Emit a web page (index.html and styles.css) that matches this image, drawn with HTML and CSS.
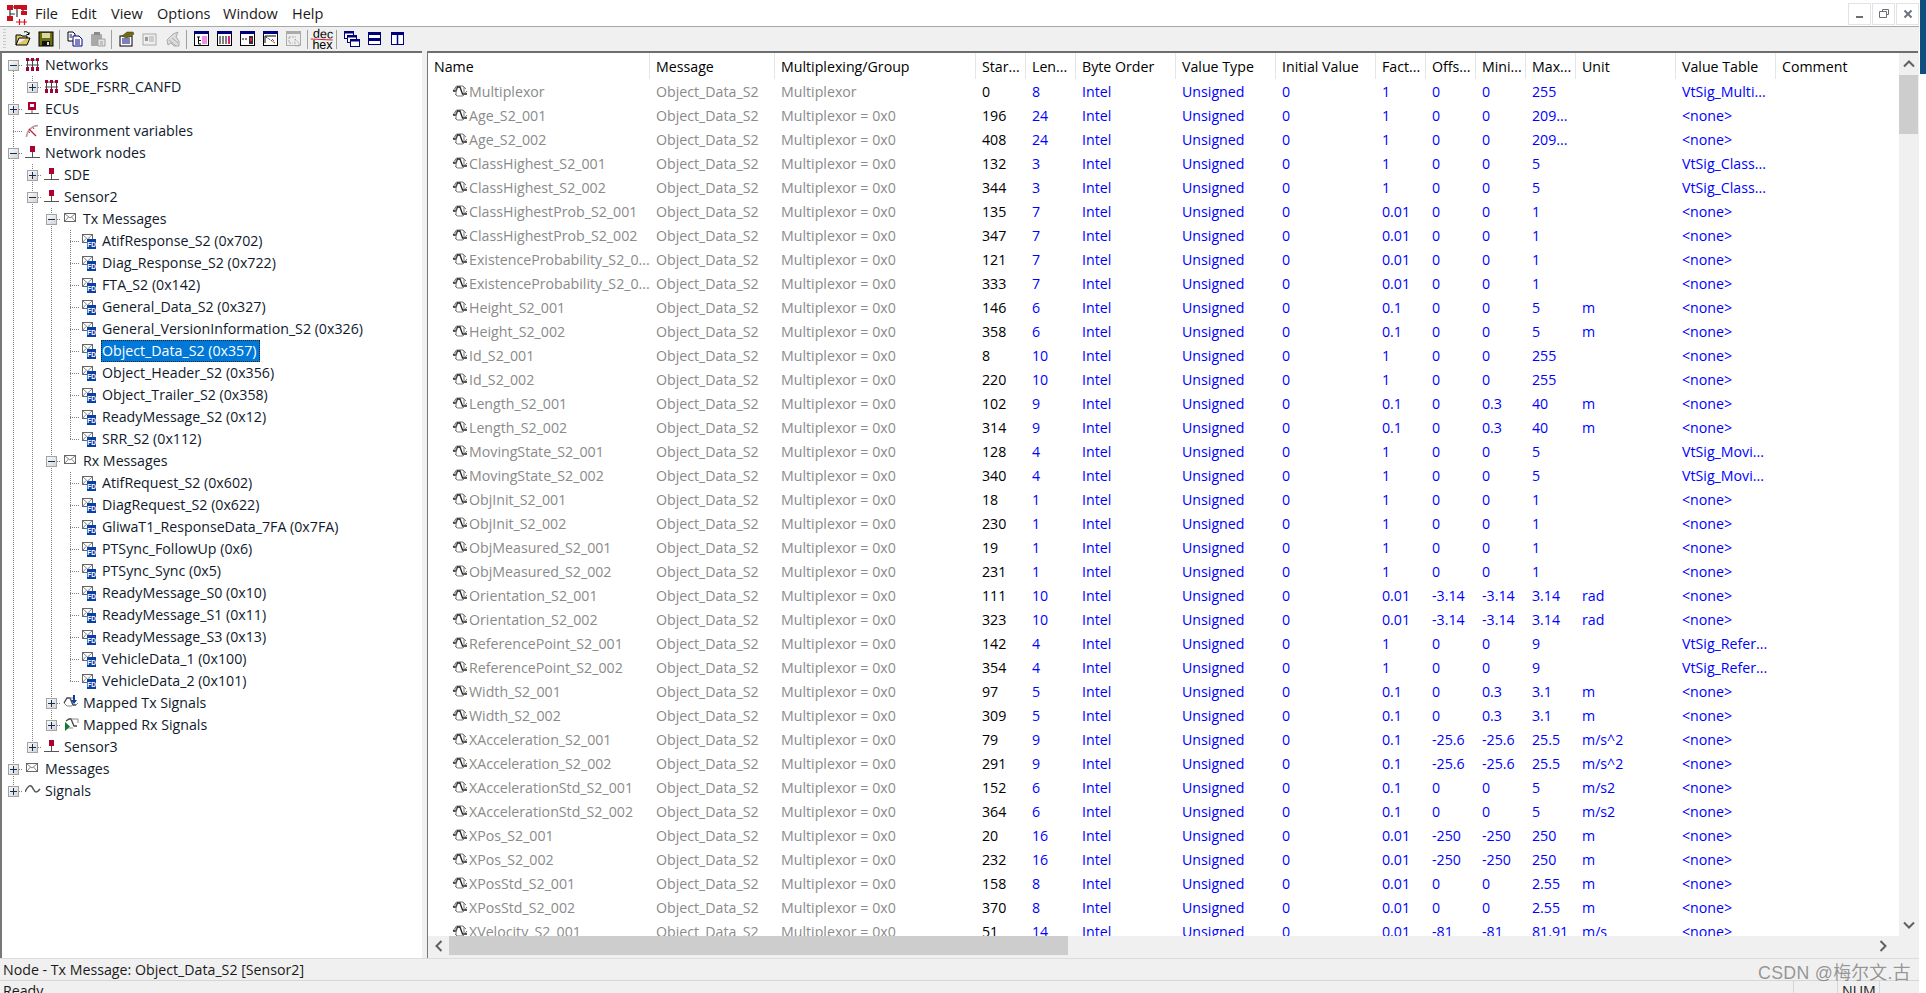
FILE: index.html
```html
<!DOCTYPE html>
<html lang="en">
<head>
<meta charset="utf-8">
<title>CANdb++ Editor</title>
<link rel="stylesheet" href="styles.css">
</head>
<body>
<svg class="defs" width="0" height="0" aria-hidden="true">
  <symbol id="logo" viewBox="0 0 20 20">
    <path d="M5 2H15M3 4V9H8M10 3V12M16 4V8M3 9V13" fill="none" stroke="#333" stroke-width="1.200"/>
    <rect x="0" y="0" width="6" height="5" fill="#c8101e"/><rect x="7" y="0" width="7" height="4" fill="#c8101e"/><rect x="14" y="0" width="6" height="5" fill="#c8101e"/>
    <rect x="14" y="6" width="6" height="4" fill="#c8101e"/><rect x="0" y="11" width="6" height="5" fill="#c8101e"/>
    <path d="M9 17H20M12.500 14V20M17.500 14V20" stroke="#e01020" stroke-width="1.200" fill="none"/>
  </symbol>
  <symbol id="net" viewBox="0 0 16 16">
    <path d="M1 3H14M2.500 3V12M7.500 3V12M12.500 3V12M1 8H14" stroke="#444" fill="none"/>
    <g fill="#a30034"><rect x="1" y="1" width="3" height="3"/><rect x="6" y="1" width="3" height="3"/><rect x="11" y="1" width="3" height="3"/><rect x="1" y="10" width="3" height="4"/><rect x="6" y="10" width="3" height="4"/><rect x="11" y="10" width="3" height="4"/></g>
  </symbol>
  <symbol id="ecu" viewBox="0 0 16 16">
    <rect x="3" y="1" width="8" height="8" fill="#b00030"/><rect x="5" y="3" width="4" height="3" fill="#fff"/>
    <path d="M7 9V13M0 12.500H14" stroke="#555" fill="none"/>
  </symbol>
  <symbol id="node" viewBox="0 0 16 16">
    <rect x="5" y="1" width="5" height="6" fill="#b00030"/>
    <path d="M7.500 7V12M0 12.500H15" stroke="#555" fill="none"/>
  </symbol>
  <symbol id="gauge" viewBox="0 0 16 16">
    <path d="M1.500 14A12 12 0 0 1 13 2.500" fill="none" stroke="#b89aa8" stroke-width="1.500"/>
    <path d="M4 6L11 13" stroke="#c02030" stroke-width="1.300"/><path d="M8 4.500L9 6M3.500 9L5 9.500" stroke="#c02030"/>
  </symbol>
  <symbol id="env" viewBox="0 0 16 16">
    <rect x="1.500" y="2.500" width="11" height="8" fill="#fff" stroke="#666"/>
    <path d="M2 3L7 7L12 3M2 10L5.500 6M12 10L8.500 6" stroke="#888" fill="none"/>
  </symbol>
  <symbol id="fd" viewBox="0 0 16 16">
    <rect x="0.500" y="1.500" width="10" height="8" fill="#fff" stroke="#666"/>
    <path d="M1 2L5.500 6L10 2M1 9L4 5.500M10 9L7 5.500" stroke="#888" fill="none"/>
    <rect x="5" y="6" width="9" height="10" fill="#0b3fa8"/>
    <text x="9.500" y="14" class="fdtxt">FD</text>
  </symbol>
  <symbol id="wave" viewBox="0 0 16 16">
    <path d="M0 9C2 5 4 2 6 3C8 4 9 9 11 9C12.500 9 13.500 8 15 6" fill="none" stroke="#555" stroke-width="1.500"/>
  </symbol>
  <symbol id="mtx" viewBox="0 0 16 16">
    <path d="M1 8L4 3H7L10 10H13" fill="none" stroke="#444" stroke-width="1.300"/>
    <path d="M1 8L4 11H9M6 3H11M13 10L15 8" fill="none" stroke="#888"/>
    <path d="M11 0V7" stroke="#0b3fa8" stroke-width="2"/><path d="M8 5H14L11 9Z" fill="#0b3fa8"/>
  </symbol>
  <symbol id="mrx" viewBox="0 0 16 16">
    <path d="M3 4L6 2H8L11 9H14" fill="none" stroke="#444" stroke-width="1.300"/>
    <path d="M8 2H15V6M3 11H10" fill="none" stroke="#888"/>
    <path d="M2 5V14L7 9.500Z" fill="#0f7a33"/>
  </symbol>
  <symbol id="sg" viewBox="0 0 16 16">
    <path d="M1 7L4.500 2H11L14 5M3 10L5 12H11L15 7" fill="none" stroke="#777"/>
    <path d="M1 7H4L5.500 3H8L10.500 10H15" fill="none" stroke="#222" stroke-width="1.300"/>
    <path d="M4 3V11M12 3V11" stroke="#777" fill="none"/>
  </symbol>
  <symbol id="t-open" viewBox="0 0 16 16">
    <path d="M1 14V4H6L7 5H12V7H4L1 14H12L15 7H12" fill="#e0c860" stroke="#000"/>
    <path d="M9 1C11 0 13 1 14 3M14 1V3.500H11.500" fill="none" stroke="#000"/>
  </symbol>
  <symbol id="t-save" viewBox="0 0 16 16">
    <rect x="1" y="1" width="14" height="14" fill="#6c6c10" stroke="#000"/>
    <rect x="4" y="2" width="8" height="5" fill="#d8d8a0"/><rect x="4" y="10" width="8" height="5" fill="#111"/><rect x="9" y="11" width="2" height="3" fill="#ddd"/>
  </symbol>
  <symbol id="t-copy" viewBox="0 0 16 16">
    <path d="M1 1H6L8 3V10H1Z" fill="#fff" stroke="#000"/>
    <path d="M6 5H12L15 8V15H6Z" fill="#fff" stroke="#00007c"/>
    <path d="M2.500 4H5M2.500 6H5M8 9H13M8 11H13M8 13H13" stroke="#00007c"/>
  </symbol>
  <symbol id="t-paste" viewBox="0 0 16 16">
    <rect x="1" y="3" width="11" height="12" rx="1" fill="#a8a8a8"/><rect x="4" y="1" width="6" height="3" fill="#8a8a8a"/>
    <path d="M8 8H15V15H8Z" fill="#e4e4e4" stroke="#a0a0a0"/><path d="M10 11H13M10 13H13" stroke="#a0a0a0"/>
  </symbol>
  <symbol id="t-prop" viewBox="0 0 16 16">
    <rect x="1" y="5" width="12" height="10" fill="#fff" stroke="#000"/>
    <path d="M3 8H11M3 10H11M3 12H11" stroke="#00007c"/>
    <path d="M3 5L8 1H14L15 3L11 6L7 7Z" fill="#6f6c10" stroke="#333" stroke-width="0.500"/>
  </symbol>
  <symbol id="t-prop2" viewBox="0 0 16 16">
    <rect x="1" y="3" width="13" height="11" fill="#eee" stroke="#aaa"/>
    <rect x="3" y="6" width="3" height="4" fill="#999"/><path d="M7 6H12M7 8H12M7 10H12" stroke="#aaa"/>
  </symbol>
  <symbol id="t-tool" viewBox="0 0 16 16">
    <path d="M2 9L8 3L13 1L11 6L14 10V15H9L6 12L3 14Z" fill="#ddd" stroke="#aaa"/>
    <path d="M4 9L11 15M7 7L13 12" stroke="#aaa"/>
  </symbol>
  <symbol id="t-w1" viewBox="0 0 16 16">
    <rect x="0.500" y="0.500" width="14" height="14" fill="#fff" stroke="#000"/><rect x="0" y="0" width="15" height="3" fill="#00007c"/>
    <path d="M3 6H6M4.500 6V13H7M4.500 9.500H7" stroke="#000" fill="none"/><path d="M8 6H13M8 8H13M8 10H13M8 12H13" stroke="#e020c0"/>
  </symbol>
  <symbol id="t-w2" viewBox="0 0 16 16">
    <rect x="0.500" y="0.500" width="14" height="14" fill="#fff" stroke="#000"/><rect x="0" y="0" width="15" height="3" fill="#00007c"/>
    <path d="M3 5V13M6 5V13M9 5V13" stroke="#000"/><path d="M12 5V13" stroke="#e02080" stroke-width="2"/>
  </symbol>
  <symbol id="t-w3" viewBox="0 0 16 16">
    <rect x="0.500" y="0.500" width="14" height="14" fill="#fff" stroke="#000"/><rect x="0" y="0" width="15" height="3" fill="#00007c"/>
    <path d="M2 8H8" stroke="#000" stroke-dasharray="2 1"/><rect x="9" y="5" width="4" height="8" fill="#333"/><rect x="10" y="7" width="2" height="3" fill="#e02040"/>
  </symbol>
  <symbol id="t-w4" viewBox="0 0 16 16">
    <rect x="0.500" y="0.500" width="14" height="14" fill="#fff" stroke="#000"/><rect x="0" y="0" width="15" height="3" fill="#00007c"/>
    <path d="M2 12V5H13" fill="none" stroke="#000"/><path d="M3 6L6 8L9 10L12 12" stroke="#000" stroke-dasharray="1 1"/><path d="M9 8L11 10" stroke="#e02040"/>
  </symbol>
  <symbol id="t-w5" viewBox="0 0 16 16">
    <rect x="0.500" y="0.500" width="14" height="14" fill="#eee" stroke="#aaa"/><rect x="0" y="0" width="15" height="3" fill="#aaa"/>
    <path d="M3 6H10M3 6V12H7M9 8L13 12V15H9Z" fill="none" stroke="#aaa" stroke-dasharray="2 1"/>
  </symbol>
  <symbol id="t-casc" viewBox="0 0 16 16">
    <rect x="0.500" y="0.500" width="9" height="7" fill="#fff" stroke="#00007c"/><rect x="0" y="0" width="10" height="2.500" fill="#00007c"/>
    <rect x="3.500" y="4.500" width="9" height="7" fill="#fff" stroke="#00007c"/><rect x="3" y="4" width="10" height="2.500" fill="#00007c"/>
    <rect x="6.500" y="8.500" width="9" height="7" fill="#fff" stroke="#00007c"/><rect x="6" y="8" width="10" height="2.500" fill="#00007c"/>
  </symbol>
  <symbol id="t-hor" viewBox="0 0 16 16">
    <rect x="1.500" y="1.500" width="12" height="12" fill="#fff" stroke="#00007c"/>
    <rect x="1" y="1" width="13" height="3" fill="#00007c"/><rect x="1" y="7" width="13" height="3" fill="#00007c"/>
  </symbol>
  <symbol id="t-ver" viewBox="0 0 16 16">
    <rect x="1.500" y="1.500" width="12" height="12" fill="#fff" stroke="#00007c"/>
    <rect x="1" y="1" width="13" height="3" fill="#00007c"/><path d="M7.500 2V14" stroke="#00007c" stroke-width="1.500"/>
  </symbol>
</svg>

<div class="screen">
<div class="app">
  <header class="menubar">
    <svg class="logo"><use href="#logo"/></svg>
    <nav class="menu"><span>File</span><span>Edit</span><span>View</span><span>Options</span><span>Window</span><span>Help</span></nav>
    <div class="winctl">
      <button class="wbtn" aria-label="Minimize"><svg viewBox="0 0 10 10"><path d="M1 8H8" stroke="#6d6d78" stroke-width="2"/></svg></button>
      <button class="wbtn" aria-label="Restore"><svg viewBox="0 0 10 10"><path d="M3.500 2.500V0.500H9.500V5.500H7.500M0.500 2.500H7.500V8.500H0.500Z" fill="none" stroke="#6d6d78"/></svg></button>
      <button class="wbtn" aria-label="Close"><svg viewBox="0 0 10 10"><path d="M1.500 1.500L8.500 8.500M8.500 1.500L1.500 8.500" stroke="#6d7480" stroke-width="2"/></svg></button>
    </div>
  </header>

  <div class="toolbar">
    <span class="grip"></span>
    <span class="tb"><svg><use href="#t-open"/></svg></span>
    <span class="tb"><svg><use href="#t-save"/></svg></span>
    <span class="tsep"></span>
    <span class="tb"><svg><use href="#t-copy"/></svg></span>
    <span class="tb"><svg><use href="#t-paste"/></svg></span>
    <span class="tsep"></span>
    <span class="tb"><svg><use href="#t-prop"/></svg></span>
    <span class="tb"><svg><use href="#t-prop2"/></svg></span>
    <span class="tb"><svg><use href="#t-tool"/></svg></span>
    <span class="tsep"></span>
    <span class="tb"><svg><use href="#t-w1"/></svg></span>
    <span class="tb"><svg><use href="#t-w2"/></svg></span>
    <span class="tb"><svg><use href="#t-w3"/></svg></span>
    <span class="tb"><svg><use href="#t-w4"/></svg></span>
    <span class="tb"><svg><use href="#t-w5"/></svg></span>
    <span class="tsep"></span>
    <span class="tb dechex"><span class="dec">dec</span><span class="hex">hex</span></span>
    <span class="tsep"></span>
    <span class="tb"><svg><use href="#t-casc"/></svg></span>
    <span class="tb"><svg><use href="#t-hor"/></svg></span>
    <span class="tb"><svg><use href="#t-ver"/></svg></span>
  </div>

  <main class="main">
    <aside class="tree">
      <div class="row"><i class="cell f"><b class="box minus"></b></i><svg class="ic"><use href="#net"/></svg><span class="lbl">Networks</span></div>
      <div class="row"><i class="cell v"></i><i class="cell l"><b class="box plus"></b></i><svg class="ic"><use href="#net"/></svg><span class="lbl">SDE_FSRR_CANFD</span></div>
      <div class="row"><i class="cell t"><b class="box plus"></b></i><svg class="ic"><use href="#ecu"/></svg><span class="lbl">ECUs</span></div>
      <div class="row"><i class="cell t"></i><svg class="ic"><use href="#gauge"/></svg><span class="lbl">Environment variables</span></div>
      <div class="row"><i class="cell t"><b class="box minus"></b></i><svg class="ic"><use href="#node"/></svg><span class="lbl">Network nodes</span></div>
      <div class="row"><i class="cell v"></i><i class="cell t"><b class="box plus"></b></i><svg class="ic"><use href="#node"/></svg><span class="lbl">SDE</span></div>
      <div class="row"><i class="cell v"></i><i class="cell t"><b class="box minus"></b></i><svg class="ic"><use href="#node"/></svg><span class="lbl">Sensor2</span></div>
      <div class="row"><i class="cell v"></i><i class="cell v"></i><i class="cell t"><b class="box minus"></b></i><svg class="ic"><use href="#env"/></svg><span class="lbl">Tx Messages</span></div>
      <div class="row"><i class="cell v"></i><i class="cell v"></i><i class="cell v"></i><i class="cell t"></i><svg class="ic"><use href="#fd"/></svg><span class="lbl">AtifResponse_S2 (0x702)</span></div>
      <div class="row"><i class="cell v"></i><i class="cell v"></i><i class="cell v"></i><i class="cell t"></i><svg class="ic"><use href="#fd"/></svg><span class="lbl">Diag_Response_S2 (0x722)</span></div>
      <div class="row"><i class="cell v"></i><i class="cell v"></i><i class="cell v"></i><i class="cell t"></i><svg class="ic"><use href="#fd"/></svg><span class="lbl">FTA_S2 (0x142)</span></div>
      <div class="row"><i class="cell v"></i><i class="cell v"></i><i class="cell v"></i><i class="cell t"></i><svg class="ic"><use href="#fd"/></svg><span class="lbl">General_Data_S2 (0x327)</span></div>
      <div class="row"><i class="cell v"></i><i class="cell v"></i><i class="cell v"></i><i class="cell t"></i><svg class="ic"><use href="#fd"/></svg><span class="lbl">General_VersionInformation_S2 (0x326)</span></div>
      <div class="row"><i class="cell v"></i><i class="cell v"></i><i class="cell v"></i><i class="cell t"></i><svg class="ic"><use href="#fd"/></svg><span class="lbl sel">Object_Data_S2 (0x357)</span></div>
      <div class="row"><i class="cell v"></i><i class="cell v"></i><i class="cell v"></i><i class="cell t"></i><svg class="ic"><use href="#fd"/></svg><span class="lbl">Object_Header_S2 (0x356)</span></div>
      <div class="row"><i class="cell v"></i><i class="cell v"></i><i class="cell v"></i><i class="cell t"></i><svg class="ic"><use href="#fd"/></svg><span class="lbl">Object_Trailer_S2 (0x358)</span></div>
      <div class="row"><i class="cell v"></i><i class="cell v"></i><i class="cell v"></i><i class="cell t"></i><svg class="ic"><use href="#fd"/></svg><span class="lbl">ReadyMessage_S2 (0x12)</span></div>
      <div class="row"><i class="cell v"></i><i class="cell v"></i><i class="cell v"></i><i class="cell l"></i><svg class="ic"><use href="#fd"/></svg><span class="lbl">SRR_S2 (0x112)</span></div>
      <div class="row"><i class="cell v"></i><i class="cell v"></i><i class="cell t"><b class="box minus"></b></i><svg class="ic"><use href="#env"/></svg><span class="lbl">Rx Messages</span></div>
      <div class="row"><i class="cell v"></i><i class="cell v"></i><i class="cell v"></i><i class="cell t"></i><svg class="ic"><use href="#fd"/></svg><span class="lbl">AtifRequest_S2 (0x602)</span></div>
      <div class="row"><i class="cell v"></i><i class="cell v"></i><i class="cell v"></i><i class="cell t"></i><svg class="ic"><use href="#fd"/></svg><span class="lbl">DiagRequest_S2 (0x622)</span></div>
      <div class="row"><i class="cell v"></i><i class="cell v"></i><i class="cell v"></i><i class="cell t"></i><svg class="ic"><use href="#fd"/></svg><span class="lbl">GliwaT1_ResponseData_7FA (0x7FA)</span></div>
      <div class="row"><i class="cell v"></i><i class="cell v"></i><i class="cell v"></i><i class="cell t"></i><svg class="ic"><use href="#fd"/></svg><span class="lbl">PTSync_FollowUp (0x6)</span></div>
      <div class="row"><i class="cell v"></i><i class="cell v"></i><i class="cell v"></i><i class="cell t"></i><svg class="ic"><use href="#fd"/></svg><span class="lbl">PTSync_Sync (0x5)</span></div>
      <div class="row"><i class="cell v"></i><i class="cell v"></i><i class="cell v"></i><i class="cell t"></i><svg class="ic"><use href="#fd"/></svg><span class="lbl">ReadyMessage_S0 (0x10)</span></div>
      <div class="row"><i class="cell v"></i><i class="cell v"></i><i class="cell v"></i><i class="cell t"></i><svg class="ic"><use href="#fd"/></svg><span class="lbl">ReadyMessage_S1 (0x11)</span></div>
      <div class="row"><i class="cell v"></i><i class="cell v"></i><i class="cell v"></i><i class="cell t"></i><svg class="ic"><use href="#fd"/></svg><span class="lbl">ReadyMessage_S3 (0x13)</span></div>
      <div class="row"><i class="cell v"></i><i class="cell v"></i><i class="cell v"></i><i class="cell t"></i><svg class="ic"><use href="#fd"/></svg><span class="lbl">VehicleData_1 (0x100)</span></div>
      <div class="row"><i class="cell v"></i><i class="cell v"></i><i class="cell v"></i><i class="cell l"></i><svg class="ic"><use href="#fd"/></svg><span class="lbl">VehicleData_2 (0x101)</span></div>
      <div class="row"><i class="cell v"></i><i class="cell v"></i><i class="cell t"><b class="box plus"></b></i><svg class="ic"><use href="#mtx"/></svg><span class="lbl">Mapped Tx Signals</span></div>
      <div class="row"><i class="cell v"></i><i class="cell v"></i><i class="cell l"><b class="box plus"></b></i><svg class="ic"><use href="#mrx"/></svg><span class="lbl">Mapped Rx Signals</span></div>
      <div class="row"><i class="cell v"></i><i class="cell l"><b class="box plus"></b></i><svg class="ic"><use href="#node"/></svg><span class="lbl">Sensor3</span></div>
      <div class="row"><i class="cell t"><b class="box plus"></b></i><svg class="ic"><use href="#env"/></svg><span class="lbl">Messages</span></div>
      <div class="row"><i class="cell l"><b class="box plus"></b></i><svg class="ic"><use href="#wave"/></svg><span class="lbl">Signals</span></div>
    </aside>

    <section class="listpane">
      <div class="listbody">
        <div class="viewport">
          <table class="grid">
            <colgroup><col class="c222"><col class="c125"><col class="c201"><col class="c50"><col class="c50"><col class="c100"><col class="c100"><col class="c100"><col class="c50"><col class="c50"><col class="c50"><col class="c50"><col class="c100"><col class="c100"><col class="c100"></colgroup>
            <thead><tr><th>Name</th><th>Message</th><th>Multiplexing/Group</th><th>Star...</th><th>Len...</th><th>Byte Order</th><th>Value Type</th><th>Initial Value</th><th>Fact...</th><th>Offs...</th><th>Mini...</th><th>Max...</th><th>Unit</th><th>Value Table</th><th class="last">Comment</th></tr></thead>
            <tbody>
<tr><td><svg class="si"><use href="#sg"/></svg>Multiplexor<td>Object_Data_S2<td>Multiplexor<td>0<td>8<td>Intel<td>Unsigned<td>0<td>1<td>0<td>0<td>255<td><td>VtSig_Multi...<td></tr>
<tr><td><svg class="si"><use href="#sg"/></svg>Age_S2_001<td>Object_Data_S2<td>Multiplexor = 0x0<td>196<td>24<td>Intel<td>Unsigned<td>0<td>1<td>0<td>0<td>209...<td><td>&lt;none&gt;<td></tr>
<tr><td><svg class="si"><use href="#sg"/></svg>Age_S2_002<td>Object_Data_S2<td>Multiplexor = 0x0<td>408<td>24<td>Intel<td>Unsigned<td>0<td>1<td>0<td>0<td>209...<td><td>&lt;none&gt;<td></tr>
<tr><td><svg class="si"><use href="#sg"/></svg>ClassHighest_S2_001<td>Object_Data_S2<td>Multiplexor = 0x0<td>132<td>3<td>Intel<td>Unsigned<td>0<td>1<td>0<td>0<td>5<td><td>VtSig_Class...<td></tr>
<tr><td><svg class="si"><use href="#sg"/></svg>ClassHighest_S2_002<td>Object_Data_S2<td>Multiplexor = 0x0<td>344<td>3<td>Intel<td>Unsigned<td>0<td>1<td>0<td>0<td>5<td><td>VtSig_Class...<td></tr>
<tr><td><svg class="si"><use href="#sg"/></svg>ClassHighestProb_S2_001<td>Object_Data_S2<td>Multiplexor = 0x0<td>135<td>7<td>Intel<td>Unsigned<td>0<td>0.01<td>0<td>0<td>1<td><td>&lt;none&gt;<td></tr>
<tr><td><svg class="si"><use href="#sg"/></svg>ClassHighestProb_S2_002<td>Object_Data_S2<td>Multiplexor = 0x0<td>347<td>7<td>Intel<td>Unsigned<td>0<td>0.01<td>0<td>0<td>1<td><td>&lt;none&gt;<td></tr>
<tr><td><svg class="si"><use href="#sg"/></svg>ExistenceProbability_S2_0...<td>Object_Data_S2<td>Multiplexor = 0x0<td>121<td>7<td>Intel<td>Unsigned<td>0<td>0.01<td>0<td>0<td>1<td><td>&lt;none&gt;<td></tr>
<tr><td><svg class="si"><use href="#sg"/></svg>ExistenceProbability_S2_0...<td>Object_Data_S2<td>Multiplexor = 0x0<td>333<td>7<td>Intel<td>Unsigned<td>0<td>0.01<td>0<td>0<td>1<td><td>&lt;none&gt;<td></tr>
<tr><td><svg class="si"><use href="#sg"/></svg>Height_S2_001<td>Object_Data_S2<td>Multiplexor = 0x0<td>146<td>6<td>Intel<td>Unsigned<td>0<td>0.1<td>0<td>0<td>5<td>m<td>&lt;none&gt;<td></tr>
<tr><td><svg class="si"><use href="#sg"/></svg>Height_S2_002<td>Object_Data_S2<td>Multiplexor = 0x0<td>358<td>6<td>Intel<td>Unsigned<td>0<td>0.1<td>0<td>0<td>5<td>m<td>&lt;none&gt;<td></tr>
<tr><td><svg class="si"><use href="#sg"/></svg>Id_S2_001<td>Object_Data_S2<td>Multiplexor = 0x0<td>8<td>10<td>Intel<td>Unsigned<td>0<td>1<td>0<td>0<td>255<td><td>&lt;none&gt;<td></tr>
<tr><td><svg class="si"><use href="#sg"/></svg>Id_S2_002<td>Object_Data_S2<td>Multiplexor = 0x0<td>220<td>10<td>Intel<td>Unsigned<td>0<td>1<td>0<td>0<td>255<td><td>&lt;none&gt;<td></tr>
<tr><td><svg class="si"><use href="#sg"/></svg>Length_S2_001<td>Object_Data_S2<td>Multiplexor = 0x0<td>102<td>9<td>Intel<td>Unsigned<td>0<td>0.1<td>0<td>0.3<td>40<td>m<td>&lt;none&gt;<td></tr>
<tr><td><svg class="si"><use href="#sg"/></svg>Length_S2_002<td>Object_Data_S2<td>Multiplexor = 0x0<td>314<td>9<td>Intel<td>Unsigned<td>0<td>0.1<td>0<td>0.3<td>40<td>m<td>&lt;none&gt;<td></tr>
<tr><td><svg class="si"><use href="#sg"/></svg>MovingState_S2_001<td>Object_Data_S2<td>Multiplexor = 0x0<td>128<td>4<td>Intel<td>Unsigned<td>0<td>1<td>0<td>0<td>5<td><td>VtSig_Movi...<td></tr>
<tr><td><svg class="si"><use href="#sg"/></svg>MovingState_S2_002<td>Object_Data_S2<td>Multiplexor = 0x0<td>340<td>4<td>Intel<td>Unsigned<td>0<td>1<td>0<td>0<td>5<td><td>VtSig_Movi...<td></tr>
<tr><td><svg class="si"><use href="#sg"/></svg>ObjInit_S2_001<td>Object_Data_S2<td>Multiplexor = 0x0<td>18<td>1<td>Intel<td>Unsigned<td>0<td>1<td>0<td>0<td>1<td><td>&lt;none&gt;<td></tr>
<tr><td><svg class="si"><use href="#sg"/></svg>ObjInit_S2_002<td>Object_Data_S2<td>Multiplexor = 0x0<td>230<td>1<td>Intel<td>Unsigned<td>0<td>1<td>0<td>0<td>1<td><td>&lt;none&gt;<td></tr>
<tr><td><svg class="si"><use href="#sg"/></svg>ObjMeasured_S2_001<td>Object_Data_S2<td>Multiplexor = 0x0<td>19<td>1<td>Intel<td>Unsigned<td>0<td>1<td>0<td>0<td>1<td><td>&lt;none&gt;<td></tr>
<tr><td><svg class="si"><use href="#sg"/></svg>ObjMeasured_S2_002<td>Object_Data_S2<td>Multiplexor = 0x0<td>231<td>1<td>Intel<td>Unsigned<td>0<td>1<td>0<td>0<td>1<td><td>&lt;none&gt;<td></tr>
<tr><td><svg class="si"><use href="#sg"/></svg>Orientation_S2_001<td>Object_Data_S2<td>Multiplexor = 0x0<td>111<td>10<td>Intel<td>Unsigned<td>0<td>0.01<td>-3.14<td>-3.14<td>3.14<td>rad<td>&lt;none&gt;<td></tr>
<tr><td><svg class="si"><use href="#sg"/></svg>Orientation_S2_002<td>Object_Data_S2<td>Multiplexor = 0x0<td>323<td>10<td>Intel<td>Unsigned<td>0<td>0.01<td>-3.14<td>-3.14<td>3.14<td>rad<td>&lt;none&gt;<td></tr>
<tr><td><svg class="si"><use href="#sg"/></svg>ReferencePoint_S2_001<td>Object_Data_S2<td>Multiplexor = 0x0<td>142<td>4<td>Intel<td>Unsigned<td>0<td>1<td>0<td>0<td>9<td><td>VtSig_Refer...<td></tr>
<tr><td><svg class="si"><use href="#sg"/></svg>ReferencePoint_S2_002<td>Object_Data_S2<td>Multiplexor = 0x0<td>354<td>4<td>Intel<td>Unsigned<td>0<td>1<td>0<td>0<td>9<td><td>VtSig_Refer...<td></tr>
<tr><td><svg class="si"><use href="#sg"/></svg>Width_S2_001<td>Object_Data_S2<td>Multiplexor = 0x0<td>97<td>5<td>Intel<td>Unsigned<td>0<td>0.1<td>0<td>0.3<td>3.1<td>m<td>&lt;none&gt;<td></tr>
<tr><td><svg class="si"><use href="#sg"/></svg>Width_S2_002<td>Object_Data_S2<td>Multiplexor = 0x0<td>309<td>5<td>Intel<td>Unsigned<td>0<td>0.1<td>0<td>0.3<td>3.1<td>m<td>&lt;none&gt;<td></tr>
<tr><td><svg class="si"><use href="#sg"/></svg>XAcceleration_S2_001<td>Object_Data_S2<td>Multiplexor = 0x0<td>79<td>9<td>Intel<td>Unsigned<td>0<td>0.1<td>-25.6<td>-25.6<td>25.5<td>m/s^2<td>&lt;none&gt;<td></tr>
<tr><td><svg class="si"><use href="#sg"/></svg>XAcceleration_S2_002<td>Object_Data_S2<td>Multiplexor = 0x0<td>291<td>9<td>Intel<td>Unsigned<td>0<td>0.1<td>-25.6<td>-25.6<td>25.5<td>m/s^2<td>&lt;none&gt;<td></tr>
<tr><td><svg class="si"><use href="#sg"/></svg>XAccelerationStd_S2_001<td>Object_Data_S2<td>Multiplexor = 0x0<td>152<td>6<td>Intel<td>Unsigned<td>0<td>0.1<td>0<td>0<td>5<td>m/s2<td>&lt;none&gt;<td></tr>
<tr><td><svg class="si"><use href="#sg"/></svg>XAccelerationStd_S2_002<td>Object_Data_S2<td>Multiplexor = 0x0<td>364<td>6<td>Intel<td>Unsigned<td>0<td>0.1<td>0<td>0<td>5<td>m/s2<td>&lt;none&gt;<td></tr>
<tr><td><svg class="si"><use href="#sg"/></svg>XPos_S2_001<td>Object_Data_S2<td>Multiplexor = 0x0<td>20<td>16<td>Intel<td>Unsigned<td>0<td>0.01<td>-250<td>-250<td>250<td>m<td>&lt;none&gt;<td></tr>
<tr><td><svg class="si"><use href="#sg"/></svg>XPos_S2_002<td>Object_Data_S2<td>Multiplexor = 0x0<td>232<td>16<td>Intel<td>Unsigned<td>0<td>0.01<td>-250<td>-250<td>250<td>m<td>&lt;none&gt;<td></tr>
<tr><td><svg class="si"><use href="#sg"/></svg>XPosStd_S2_001<td>Object_Data_S2<td>Multiplexor = 0x0<td>158<td>8<td>Intel<td>Unsigned<td>0<td>0.01<td>0<td>0<td>2.55<td>m<td>&lt;none&gt;<td></tr>
<tr><td><svg class="si"><use href="#sg"/></svg>XPosStd_S2_002<td>Object_Data_S2<td>Multiplexor = 0x0<td>370<td>8<td>Intel<td>Unsigned<td>0<td>0.01<td>0<td>0<td>2.55<td>m<td>&lt;none&gt;<td></tr>
<tr><td><svg class="si"><use href="#sg"/></svg>XVelocity_S2_001<td>Object_Data_S2<td>Multiplexor = 0x0<td>51<td>14<td>Intel<td>Unsigned<td>0<td>0.01<td>-81<td>-81<td>81.91<td>m/s<td>&lt;none&gt;<td></tr>
            </tbody>
          </table>
        </div>
        <div class="vbar">
          <span class="arrow"><svg viewBox="0 0 12 8"><path d="M1 6.500L6 1.500L11 6.500" fill="none" stroke="#606060" stroke-width="2"/></svg></span>
          <span class="vthumb"></span>
          <span class="vtrack"></span>
          <span class="arrow"><svg viewBox="0 0 12 8"><path d="M1 1.500L6 6.500L11 1.500" fill="none" stroke="#606060" stroke-width="2"/></svg></span>
        </div>
      </div>
      <div class="hbar">
        <span class="harrow"><svg viewBox="0 0 8 12"><path d="M6.500 1L1.500 6L6.500 11" fill="none" stroke="#606060" stroke-width="2"/></svg></span>
        <span class="hthumb"></span>
        <span class="htrack"></span>
        <span class="harrow"><svg viewBox="0 0 8 12"><path d="M1.500 1L6.500 6L1.500 11" fill="none" stroke="#606060" stroke-width="2"/></svg></span>
      </div>
    </section>
  </main>

  <div class="status1">Node - Tx Message: Object_Data_S2 [Sensor2]</div>
  <div class="status2">
    <span class="st-main">Ready</span>
    <span class="st-pane w44"></span>
    <span class="st-pane w42">NUM</span>
    <span class="st-pane w40"></span>
  </div>
</div>
<div class="strip"><div class="strip-blue"></div></div>
</div>
<div class="watermark">CSDN @梅尔文.古</div>
</body>
</html>
```
FILE: styles.css
```css
* { box-sizing: border-box; }
html, body { margin: 0; padding: 0; height: 100%; overflow: hidden; background: #fff; }
body { font-family: "Open Sans", "Noto Sans", sans-serif; font-size: 14.200px; color: #000; }
.defs { position: absolute; }
.fdtxt { font: bold 6.500px "Liberation Sans", sans-serif; fill: #fff; text-anchor: middle; }

.screen { display: flex; width: 1926px; height: 993px; overflow: hidden; }
.app { width: 1919px; height: 993px; display: flex; flex-direction: column; background: #f0f0f0; flex: none; overflow: hidden; }
.strip { flex: 1; background: #fff; }
.strip-blue { height: 74px; margin-left: 1px; background: #0f4f80; }

.menubar { height: 27px; flex: none; display: flex; align-items: flex-start; background: #fff; border-bottom: 1px solid #a8a8a8; }
.logo { width: 20px; height: 20px; margin: 5px 0 0 7px; flex: none; }
.menu { display: flex; margin-left: 8px; height: 26px; line-height: 28px; font-size: 14.500px; color: #1a1a1a; }
.menu span:nth-child(1) { width: 36px; }
.menu span:nth-child(2) { width: 40px; }
.menu span:nth-child(3) { width: 46px; }
.menu span:nth-child(4) { width: 66px; }
.menu span:nth-child(5) { width: 69px; }
.winctl { margin-left: auto; display: flex; gap: 1px; padding-top: 3px; }
.wbtn { width: 23px; height: 22px; padding: 0; border: 1px solid #e3e3e3; background: #fff; display: flex; align-items: center; justify-content: center; }
.wbtn svg { width: 10px; height: 10px; }

.toolbar { height: 24px; flex: none; display: flex; align-items: center; background: #f0f0f0; padding-left: 3px; }
.grip { width: 3px; height: 20px; margin-right: 5px; background-image: repeating-linear-gradient(#c8c8c8 0 1px, transparent 1px 3px); }
.tb { width: 23px; height: 24px; display: flex; align-items: center; justify-content: center; flex: none; }
.tb svg { width: 16px; height: 16px; }
.tsep { width: 1px; height: 19px; margin: 0 3px 0 2px; background: #a0a0a0; flex: none; }
.dechex { flex-direction: column; line-height: 10px; font-family: "Liberation Sans", sans-serif; font-size: 12.500px; }
.dechex .dec { color: #000; border-bottom: 1px solid #e02030; transform: rotate(3deg); padding-left: 2px; }
.dechex .hex { color: #000; }

.main { flex: none; height: 907px; display: flex; }
.tree { width: 422px; flex: none; background: #fff; border-left: 2px solid #777; border-top: 2px solid #6e6e6e; padding: 1px 0 0 1px; overflow: hidden; color: #101a2c; }
.row { display: flex; align-items: center; height: 22px; }
.cell { width: 19px; height: 22px; flex: none; display: flex; align-items: center; padding-left: 5px; background-repeat: no-repeat; }
.cell.v { background-image: repeating-linear-gradient(#808080 0 1px, transparent 1px 2px); background-size: 1px 100%; background-position: 10px 0; }
.cell.t { background-image: repeating-linear-gradient(#808080 0 1px, transparent 1px 2px), repeating-linear-gradient(90deg, #808080 0 1px, transparent 1px 2px); background-size: 1px 100%, 12px 1px; background-position: 10px 0, 10px 11px; }
.cell.l { background-image: repeating-linear-gradient(#808080 0 1px, transparent 1px 2px), repeating-linear-gradient(90deg, #808080 0 1px, transparent 1px 2px); background-size: 1px 11px, 12px 1px; background-position: 10px 0, 10px 11px; }
.cell.f { background-image: repeating-linear-gradient(#808080 0 1px, transparent 1px 2px), repeating-linear-gradient(90deg, #808080 0 1px, transparent 1px 2px); background-size: 1px 11px, 12px 1px; background-position: 10px 11px, 10px 11px; }
.box { width: 11px; height: 11px; border: 1px solid #a3a3a3; background: linear-gradient(135deg, #fafafa, #d4d4d4); display: block; }
.box.minus { background: linear-gradient(#0f2f5a, #0f2f5a) center / 7px 1px no-repeat, linear-gradient(135deg, #fafafa, #d4d4d4); }
.box.plus { background: linear-gradient(#0f2f5a, #0f2f5a) center / 7px 1px no-repeat, linear-gradient(#0f2f5a, #0f2f5a) center / 1px 7px no-repeat, linear-gradient(135deg, #fafafa, #d4d4d4); }
.ic { width: 16px; height: 16px; margin-left: 3px; flex: none; }
.lbl { margin-left: 3px; padding: 0 1px; height: 22px; line-height: 21px; white-space: nowrap; }
.lbl.sel { background: #0078d7; color: #fff; outline: 1px dotted #222; outline-offset: -1px; padding-right: 4px; }

.listpane { width: 1492px; margin-left: 5px; flex: none; display: flex; flex-direction: column; border-left: 1px solid #777; }
.listbody { flex: 1; min-height: 0; display: flex; border-top: 2px solid #6e6e6e; margin-right: 1px; }
.viewport { flex: 1; min-width: 0; background: #fff; overflow: hidden; }
.grid { border-collapse: separate; border-spacing: 0; table-layout: fixed; width: 1448px; }
.c222 { width: 222px; } .c125 { width: 125px; } .c201 { width: 201px; } .c50 { width: 50px; } .c100 { width: 100px; }
.grid th { height: 26px; padding: 0 0 0 6px; text-align: left; font-weight: 400; white-space: nowrap; overflow: hidden; border-right: 1px solid #e5e5e5; color: #000; }
.grid th.last { border-right: 0; }
.grid td { height: 24px; padding: 0 0 0 6px; white-space: nowrap; overflow: hidden; color: #0000ff; vertical-align: middle; }
.grid td:nth-child(-n+3) { color: #8a8a8a; }
.grid td:nth-child(1) { padding-left: 24px; }
.grid td:nth-child(4) { color: #000; }
.si { width: 16px; height: 16px; margin-right: 1px; vertical-align: -3px; }

.vbar { width: 19px; flex: none; display: flex; flex-direction: column; background: #f0f0f0; }
.arrow { height: 22px; flex: none; display: flex; align-items: center; justify-content: center; }
.arrow svg { width: 12px; height: 8px; }
.vthumb { height: 59px; flex: none; background: #cdcdcd; }
.vtrack { flex: 1; }
.hbar { height: 22px; flex: none; display: flex; align-items: flex-start; background: #f0f0f0; padding-right: 26px; }
.harrow { width: 21px; height: 19px; flex: none; display: flex; align-items: center; justify-content: center; }
.harrow svg { width: 8px; height: 12px; }
.hthumb { width: 619px; height: 19px; flex: none; background: #cdcdcd; }
.htrack { flex: 1; }

.status1 { height: 22px; flex: none; border-top: 1px solid #dcdcdc; padding-left: 3px; line-height: 22px; color: #1a1a1a; background: #f0f0f0; }
.status2 { height: 24px; flex: none; border-top: 1px solid #d6d6d6; display: flex; line-height: 20px; color: #1a1a1a; background: #f0f0f0; }
.st-main { flex: 1; padding-left: 3px; }
.st-pane { flex: none; border-left: 1px solid #d6d6d6; padding-left: 4px; }
.w44 { width: 44px; } .w42 { width: 42px; } .w40 { width: 40px; }

.watermark { position: absolute; left: 1758px; top: 963px; font: 17.800px/20px "Liberation Sans", "Noto Sans CJK SC", sans-serif; color: rgba(90, 90, 90, 0.62); white-space: nowrap; letter-spacing: 0.3px; }
```
